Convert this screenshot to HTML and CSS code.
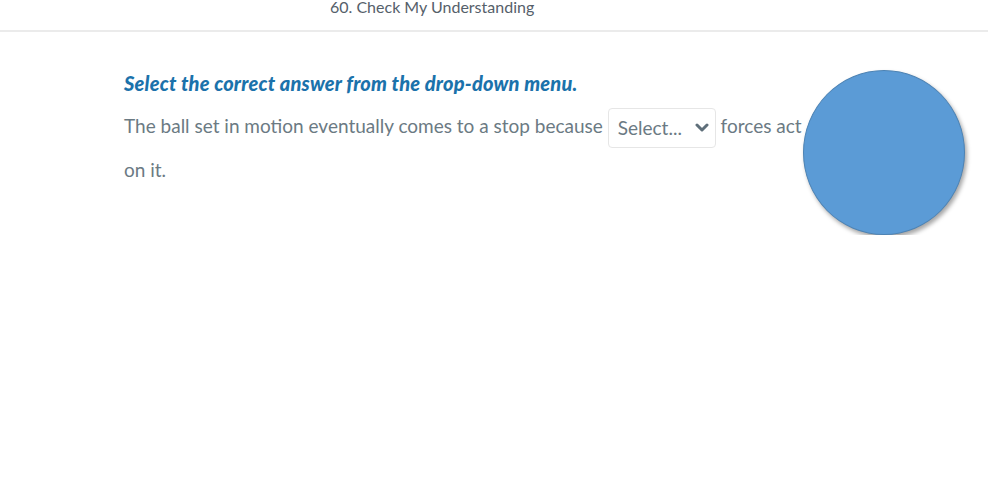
FILE: index.html
```html
<!DOCTYPE html>
<html lang="en">
<head>
    <meta charset="UTF-8">
    <title>Check My Understanding</title>
    <link rel="stylesheet" href="styles.css">
</head>
<body>
    <div class="page__header">
        <span class="page__title">60. Check My Understanding</span>
    </div>

    <div class="question">
        <div class="question__ball"></div>
        <p class="question__prompt">Select the correct answer from the drop-down menu.</p>
        <p class="question__text">
            The ball set in motion eventually comes to a stop because
            <span class="question__select">
                <span class="question__select-label">Select...</span>
                <svg class="question__select-arrow" width="14" height="10" viewBox="0 0 14 10">
                    <path d="M2 2 L7 7 L12 2" fill="none" stroke="#5f6f7a" stroke-width="3" stroke-linecap="round" stroke-linejoin="round"/>
                </svg>
            </span>
            forces act on it.
        </p>
    </div>
</body>
</html>
```

FILE: styles.css
```css
body {
    margin: 0;
    background: #fff;
    font-family: Lato, "Open Sans", sans-serif;
    color: #6b7a83;
}

.page__header {
    height: 30px;
    border-bottom: 2px solid #ebebeb;
    padding-left: 330px;
    font-size: 16px;
    line-height: 14px;
    color: #55606a;
}

.question {
    padding: 38px 0 0 124px;
    width: 850px;
}

.question__ball {
    float: right;
    width: 160px;
    height: 163px;
    margin-right: 9px;
    border-radius: 50%;
    background: #5b9bd6;
    border: 1px solid #4d83b4;
    box-shadow: 2px 3px 4px rgba(0, 0, 0, 0.35);
}

.question__prompt {
    margin: 0;
    font-size: 20px;
    font-weight: 900;
    font-style: italic;
    letter-spacing: 0.2px;
    color: #1b72ab;
    line-height: 26px;
}

.question__text {
    margin: 8px 0 0;
    font-size: 19px;
    line-height: 44px;
}

.question__select {
    display: inline-flex;
    align-items: center;
    justify-content: space-between;
    box-sizing: border-box;
    width: 108px;
    height: 40px;
    padding: 0 6px 0 9px;
    border: 1px solid #e6e6e6;
    border-radius: 4px;
    vertical-align: middle;
}
```
